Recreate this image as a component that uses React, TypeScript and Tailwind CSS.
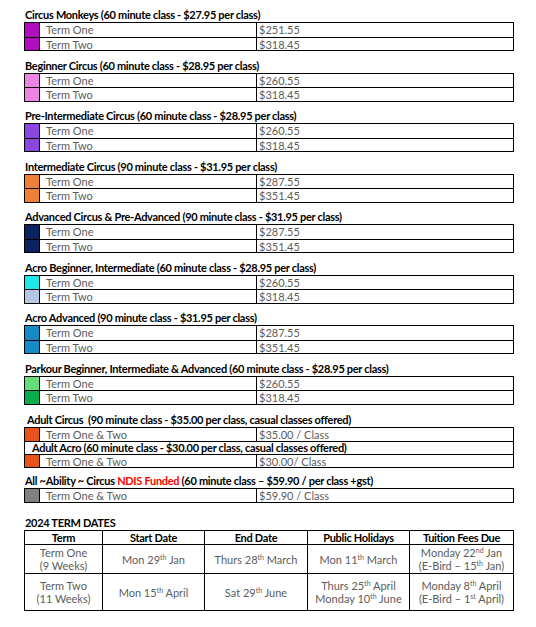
const groups = [
  {
    title: "Circus Monkeys (60 minute class - $27.95 per class)",
    rows: [
      { label: "Term One", price: "$251.55", color: "bg-[#b20dbf]" },
      { label: "Term Two", price: "$318.45", color: "bg-[#b20dbf]" },
    ],
  },
  {
    title: "Beginner Circus (60 minute class - $28.95 per class)",
    rows: [
      { label: "Term One", price: "$260.55", color: "bg-[#ec86e2]" },
      { label: "Term Two", price: "$318.45", color: "bg-[#ec86e2]" },
    ],
  },
  {
    title: "Pre-Intermediate Circus (60 minute class - $28.95 per class)",
    rows: [
      { label: "Term One", price: "$260.55", color: "bg-[#8a47e0]" },
      { label: "Term Two", price: "$318.45", color: "bg-[#8a47e0]" },
    ],
  },
  {
    title: "Intermediate Circus (90 minute class - $31.95 per class)",
    rows: [
      { label: "Term One", price: "$287.55", color: "bg-[#ef8136]" },
      { label: "Term Two", price: "$351.45", color: "bg-[#ef8136]" },
    ],
  },
  {
    title: "Advanced Circus & Pre-Advanced (90 minute class - $31.95 per class)",
    rows: [
      { label: "Term One", price: "$287.55", color: "bg-[#0b2260]" },
      { label: "Term Two", price: "$351.45", color: "bg-[#0b2260]" },
    ],
  },
  {
    title: "Acro Beginner, Intermediate (60 minute class - $28.95 per class)",
    rows: [
      { label: "Term One", price: "$260.55", color: "bg-[#1ee8ea]" },
      { label: "Term Two", price: "$318.45", color: "bg-[#b4c7e7]" },
    ],
  },
  {
    title: "Acro Advanced (90 minute class - $31.95 per class)",
    rows: [
      { label: "Term One", price: "$287.55", color: "bg-[#168bc7]" },
      { label: "Term Two", price: "$351.45", color: "bg-[#168bc7]" },
    ],
  },
  {
    title: "Parkour Beginner, Intermediate & Advanced (60 minute class - $28.95 per class)",
    rows: [
      { label: "Term One", price: "$260.55", color: "bg-[#66db78]" },
      { label: "Term Two", price: "$318.45", color: "bg-[#08ad4c]" },
    ],
  },
];

const font = { fontFamily: "Lato, 'Noto Sans', sans-serif" };

function PriceRow({
  label,
  price,
  color,
  first,
  short,
}: {
  label: string;
  price: string;
  color: string;
  first?: boolean;
  short?: boolean;
}) {
  return (
    <div className={`flex ${short ? "h-[13px]" : "h-[13.5px]"} ${first ? "" : "border-t border-black"}`}>
      <div className={`w-[15px] shrink-0 border-r border-black ${color}`} />
      <div className="w-[217px] shrink-0 border-r border-black pl-[6px] text-[11px] leading-[13px] text-[#5c5c5c]">
        {label}
      </div>
      <div className="flex-1 pl-[2px] text-[11px] leading-[13px] text-[#5c5c5c]">{price}</div>
    </div>
  );
}

function Sup({ children }: { children: string }) {
  return <sup className="text-[7px] relative -top-[4px]">{children}</sup>;
}

export default function App() {
  return (
    <div className="w-[536px] h-[627px] bg-white pt-[8px] pl-[24px]" style={font}>
      <div className="w-[490px]">
        {groups.map((g, i) => (
          <div key={i} className={i === 0 ? "" : "mt-[7.5px]"}>
            <div className="pl-[1px] text-[11px] font-bold leading-[14px] text-black tracking-[-0.3px]">{g.title}</div>
            <div className="border border-black">
              {g.rows.map((r, j) => (
                <PriceRow key={j} {...r} first={j === 0} />
              ))}
            </div>
          </div>
        ))}

        <div className="mt-[8px] pl-[3px] text-[11px] font-bold leading-[14px] text-black tracking-[-0.3px]">
          Adult Circus &nbsp;(90 minute class - $35.00 per class, casual classes offered)
        </div>
        <div className="border border-black">
          <PriceRow label="Term One & Two" price="$35.00 / Class" color="bg-[#e8531a]" first short />
          <div className="h-[13px] border-t border-black pl-[7px] text-[11px] font-bold leading-[12px] text-black tracking-[-0.3px]">
            Adult Acro (60 minute class - $30.00 per class, casual classes offered)
          </div>
          <PriceRow label="Term One & Two" price="$30.00/ Class" color="bg-[#e8531a]" short />
        </div>

        <div className="mt-[6px] pl-[1px] text-[11px] font-bold leading-[14px] text-black tracking-[-0.3px]">
          All ~Ability ~ Circus <span className="text-[#ff0000]">NDIS Funded</span> (60 minute class – $59.90 / per
          class +gst)
        </div>
        <div className="border border-black">
          <PriceRow label="Term One & Two" price="$59.90 / Class" color="bg-[#808080]" first />
        </div>

        <div className="mt-[13px] pl-[1px] text-[11px] font-bold leading-[14px] text-black tracking-[-0.3px]">
          2024 TERM DATES
        </div>
        <div className="grid grid-cols-[78px_102px_103px_102px_1fr] border border-black text-center text-[11px] leading-[13px] text-[#5c5c5c]">
          {["Term", "Start Date", "End Date", "Public Holidays", "Tuition Fees Due"].map((h, i) => (
            <div
              key={h}
              className={`h-[13px] font-bold text-black tracking-[-0.3px] ${i < 4 ? "border-r border-black" : ""}`}
            >
              {h}
            </div>
          ))}

          <div className="h-[29px] border-t border-r border-black flex flex-col justify-center">
            <div>Term One</div>
            <div>(9 Weeks)</div>
          </div>
          <div className="border-t border-r border-black flex items-center justify-center">
            <span>
              Mon 29<Sup>th</Sup> Jan
            </span>
          </div>
          <div className="border-t border-r border-black flex items-center justify-center">
            <span>
              Thurs 28<Sup>th</Sup> March
            </span>
          </div>
          <div className="border-t border-r border-black flex items-center justify-center">
            <span>
              Mon 11<Sup>th</Sup> March
            </span>
          </div>
          <div className="border-t border-black flex flex-col justify-center">
            <div>
              Monday 22<Sup>nd</Sup> Jan
            </div>
            <div>
              (E-Bird – 15<Sup>th</Sup> Jan)
            </div>
          </div>

          <div className="h-[37px] border-t border-r border-black flex flex-col justify-center">
            <div>Term Two</div>
            <div>(11 Weeks)</div>
          </div>
          <div className="border-t border-r border-black flex items-center justify-center">
            <span>
              Mon 15<Sup>th</Sup> April
            </span>
          </div>
          <div className="border-t border-r border-black flex items-center justify-center">
            <span>
              Sat 29<Sup>th</Sup> June
            </span>
          </div>
          <div className="border-t border-r border-black flex flex-col justify-center">
            <div>
              Thurs 25<Sup>th</Sup> April
            </div>
            <div>
              Monday 10<Sup>th</Sup> June
            </div>
          </div>
          <div className="border-t border-black flex flex-col justify-center">
            <div>
              Monday 8<Sup>th</Sup> April
            </div>
            <div>
              (E-Bird – 1<Sup>st</Sup> April)
            </div>
          </div>
        </div>
      </div>
    </div>
  );
}
